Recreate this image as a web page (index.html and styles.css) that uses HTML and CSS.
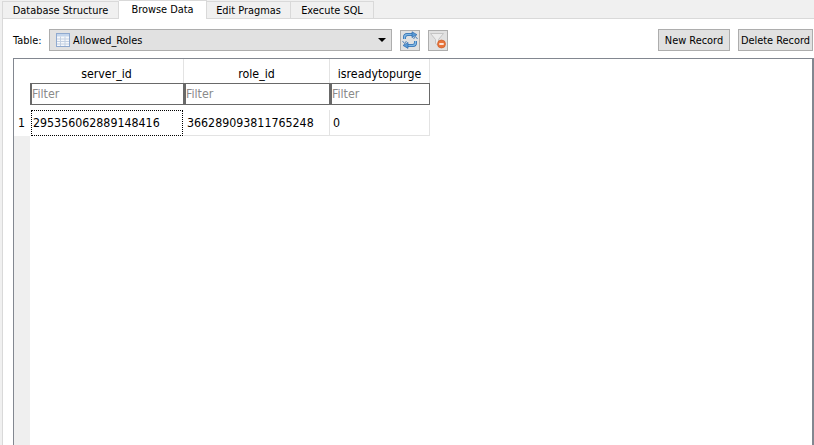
FILE: index.html
```html
<!DOCTYPE html>
<html lang="en">
<head>
<meta charset="utf-8">
<title>Browse Data</title>
<link rel="stylesheet" href="styles.css">
</head>
<body>
<div class="tabs">
  <div class="tab tab-first">Database Structure</div>
  <div class="tab tab-active">Browse Data</div>
  <div class="tab tab-pragmas">Edit Pragmas</div>
  <div class="tab tab-sql">Execute SQL</div>
</div>
<div class="pane">
  <div class="toolbar">
    <span class="label">Table:</span>
    <div class="combo">
      <svg class="table-icon" width="16" height="16" viewBox="0 0 16 16">
        <rect x="1.500" y="1.500" width="13" height="13" fill="#f6f8fb" stroke="#8fa9cf"/>
        <rect x="2" y="2" width="12" height="2.500" fill="#c3d5ec"/>
        <path d="M2 7h12M2 9.500h12M2 12h12M5.500 4.500v9.500M10 4.500v9.500" stroke="#c3d0e2" fill="none"/>
      </svg>
      <span class="combo-text">Allowed_Roles</span>
      <span class="arrow"></span>
    </div>
    <button class="icon-btn refresh">
      <svg width="18" height="18" viewBox="0 0 18 18">
        <path d="M3.500 8V6.500C3.500 4.500 5 3.500 6.500 3.500H12" fill="none" stroke="#2f6cae" stroke-width="3"/>
        <path d="M14.500 10v1.500c0 2-1.500 3-3 3H6" fill="none" stroke="#2f6cae" stroke-width="3"/>
        <path d="M3.500 8V6.500C3.500 4.500 5 3.500 6.500 3.500H12" fill="none" stroke="#7fb8e6" stroke-width="1.500"/>
        <path d="M14.500 10v1.500c0 2-1.500 3-3 3H6" fill="none" stroke="#7fb8e6" stroke-width="1.500"/>
        <path d="M11 .8l5 2.900-5 2.900z" fill="#5a9ad6" stroke="#2f6cae" stroke-width=".7"/>
        <path d="M7 11.400l-5 3 5 3z" fill="#5a9ad6" stroke="#2f6cae" stroke-width=".7"/>
        <path d="M12.500 8l2-2.500 2 2.500M5.500 10l-2 2.500-2-2.500" fill="none" stroke="#2f6cae" stroke-width=".8"/>
      </svg>
    </button>
    <button class="icon-btn clear">
      <svg width="18" height="18" viewBox="0 0 18 18">
        <path d="M1.500 2.500h13l-5 6v6l-3-2v-4z" fill="#ececec" stroke="#c4c4c4"/>
        <circle cx="12.500" cy="13" r="4" fill="#e8743b" stroke="#c9561f" stroke-width=".6"/>
        <rect x="10.300" y="12.200" width="4.400" height="1.600" fill="#fff"/>
      </svg>
    </button>
    <button class="btn btn-new">New Record</button>
    <button class="btn btn-delete">Delete Record</button>
  </div>
  <div class="grid">
    <div class="gutter">
      <div class="gutter-head"></div>
      <div class="row-num">1</div>
    </div>
    <div class="table">
      <div class="head">server_id</div>
      <div class="head">role_id</div>
      <div class="head">isreadytopurge</div>
      <div class="filter">Filter</div>
      <div class="filter">Filter</div>
      <div class="filter filter-last">Filter</div>
      <div class="cell cell-current">295356062889148416</div>
      <div class="cell">366289093811765248</div>
      <div class="cell">0</div>
    </div>
  </div>
</div>
</body>
</html>
```
FILE: styles.css
```css
* { box-sizing: border-box; }
html, body { margin: 0; padding: 0; }
body {
  width: 814px;
  height: 445px;
  overflow: hidden;
  background: #f0f0f0;
  font-family: "DejaVu Sans", "Liberation Sans", sans-serif;
  font-stretch: condensed;
  font-size: 10.900px;
  color: #000;
}
.tabs {
  display: flex;
  height: 18px;
  padding-left: 2px;
  align-items: flex-end;
}
.tab {
  height: 17px;
  background: #f0f0f0;
  border: 1px solid #d9d9d9;
  border-bottom: 0;
  display: flex;
  align-items: center;
  justify-content: center;
}
.tab-first { width: 117px; }
.tab-active {
  width: 88px;
  height: 19px;
  background: #fff;
  position: relative;
  z-index: 1;
  margin-bottom: -1px;
  margin-right: -1px;
  padding-bottom: 2px;
  border-left: 0;
}
.tab-pragmas { width: 85px; margin-right: -1px; }
.tab-sql { width: 84px; }
.pane {
  height: 427px;
  margin-left: 2px;
  background: #fff;
  border-left: 1px solid #d9d9d9;
  border-top: 1px solid #d9d9d9;
  padding-top: 10px;
}
.toolbar {
  display: flex;
  align-items: center;
  height: 22px;
  padding-left: 10px;
}
.label { width: 36px; }
.combo {
  width: 343px;
  height: 22px;
  background: #e1e1e1;
  border: 1px solid #adadad;
  display: flex;
  align-items: center;
  padding-left: 5px;
}
.table-icon { flex: none; }
.combo-text { margin-left: 2px; flex: 1; }
.arrow {
  width: 0;
  height: 0;
  margin-right: 5px;
  border-left: 4px solid transparent;
  border-right: 4px solid transparent;
  border-top: 4px solid #000;
}
.icon-btn {
  width: 20px;
  height: 21px;
  padding: 0;
  background: #e1e1e1;
  border: 1px solid #adadad;
  display: flex;
  align-items: center;
  justify-content: center;
}
.refresh { margin-left: 8px; }
.clear { margin-left: 8px; }
.btn {
  height: 22px;
  padding: 0;
  background: #e1e1e1;
  border: 1px solid #adadad;
  font: inherit;
  font-stretch: condensed;
  color: #000;
}
.btn-new { width: 72px; margin-left: 210px; }
.btn-delete { width: 75px; margin-left: 8px; }
.grid {
  display: flex;
  height: 387px;
  margin-top: 7px;
  margin-left: 10px;
  border: 1px solid #828790;
  border-bottom: 0;
  border-right-width: 2px;
}
.gutter {
  width: 16px;
  flex: none;
  background: #efefef;
  display: flex;
  flex-direction: column;
}
.gutter-head {
  height: 51px;
  background: #fff;
}
.row-num {
  height: 26px;
  background: #fff;
  padding-left: 4px;
  padding-bottom: 1px;
  display: flex;
  align-items: center;
  font-size: 12.300px;
}
.table {
  display: grid;
  grid-template-columns: 154px 146px 100px;
  grid-template-rows: 24px 22px 5px 26px;
  align-content: start;
  font-size: 12.300px;
}
.head {
  display: flex;
  align-items: center;
  justify-content: center;
  padding-top: 6px;
  border-right: 1px solid #e3e3e3;
}
.filter {
  border: 1px solid #696969;
  border-left-width: 2px;
  background: #fff;
  color: #8a8a8a;
  padding-left: 0;
  display: flex;
  align-items: center;
}
.filter-last {
  border-left-width: 2px;
  border-right-width: 1px;
}
.cell {
  grid-row: 4;
  display: flex;
  align-items: center;
  padding-left: 3px;
  border-right: 1px solid #e3e3e3;
  border-bottom: 1px solid #e3e3e3;
}
.cell-current {
  outline: 1px dotted #000;
  outline-offset: -1px;
  margin-left: 1px;
  margin-right: 1px;
  padding-left: 2px;
  padding-bottom: 1px;
  border: 0;
}
```
